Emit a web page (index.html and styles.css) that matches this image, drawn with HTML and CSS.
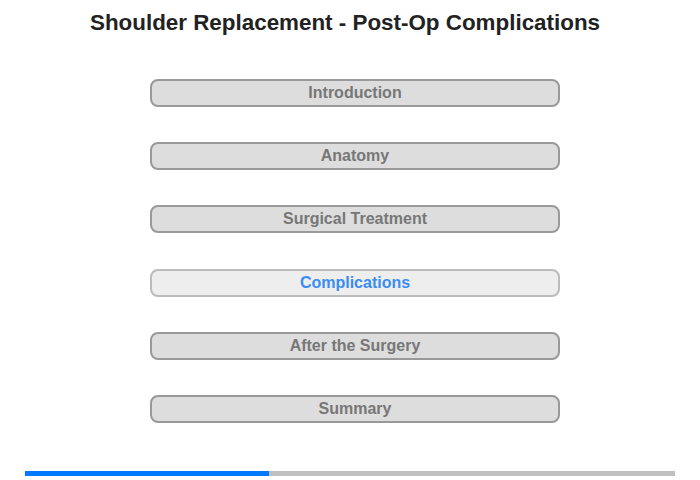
FILE: index.html
```html
<!DOCTYPE html>
<html lang="en">
<head>
<meta charset="utf-8">
<title>Shoulder Replacement - Post-Op Complications</title>
<link rel="stylesheet" href="styles.css">
</head>
<body>
<div class="page">
  <h1 class="title">Shoulder Replacement - Post-Op Complications</h1>
  <nav class="menu">
    <div class="menu-item">Introduction</div>
    <div class="menu-item">Anatomy</div>
    <div class="menu-item">Surgical Treatment</div>
    <div class="menu-item active">Complications</div>
    <div class="menu-item">After the Surgery</div>
    <div class="menu-item">Summary</div>
  </nav>
  <div class="progress"><div class="progress-fill" style="width: 37.5%"></div></div>
</div>
</body>
</html>
```

FILE: styles.css
```css
html, body {
  margin: 0;
  padding: 0;
  background: #fff;
}

.page {
  width: 700px;
  height: 480px;
  display: flex;
  flex-direction: column;
  font-family: "Liberation Sans", Arial, sans-serif;
}

.title {
  margin: 0;
  padding: 10px 10px 0 0;
  font-size: 22.4px;
  line-height: 26px;
  font-weight: bold;
  color: #222;
  text-align: center;
}

.menu {
  display: flex;
  flex-direction: column;
  gap: 35.2px;
  width: 410px;
  margin: 43px 0 0 150px;
}

.menu-item {
  box-sizing: border-box;
  height: 28px;
  border: 2px solid #999;
  border-radius: 8px;
  background: #ddd;
  color: #777;
  font-size: 16px;
  font-weight: bold;
  line-height: 24px;
  text-align: center;
}

.menu-item.active {
  background: #eee;
  border-color: #bbb;
  color: #3b8cf5;
}

.progress {
  margin: 48px 25px 0;
  height: 5px;
  background: #c0c0c0;
}

.progress-fill {
  height: 100%;
  background: #007bff;
}
```
